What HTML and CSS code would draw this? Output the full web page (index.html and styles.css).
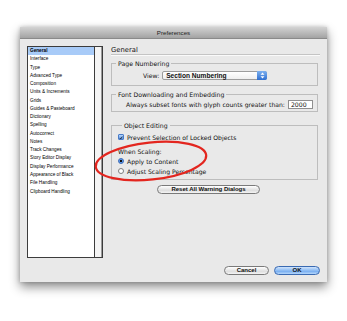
FILE: index.html
```html
<!DOCTYPE html>
<html>
<head>
<meta charset="utf-8">
<link rel="stylesheet" href="styles.css">
</head>
<body>
<div class="window">
  <div class="titlebar">Preferences</div>
  <div class="body">
    <div class="panes">
      <div class="sidebar">
        <ul class="list">
          <li class="sel">General</li>
          <li>Interface</li>
          <li>Type</li>
          <li>Advanced Type</li>
          <li>Composition</li>
          <li>Units &amp; Increments</li>
          <li>Grids</li>
          <li>Guides &amp; Pasteboard</li>
          <li>Dictionary</li>
          <li>Spelling</li>
          <li>Autocorrect</li>
          <li>Notes</li>
          <li>Track Changes</li>
          <li>Story Editor Display</li>
          <li>Display Performance</li>
          <li>Appearance of Black</li>
          <li>File Handling</li>
          <li>Clipboard Handling</li>
        </ul>
        <div class="scroll"></div>
      </div>
      <div class="main">
        <div class="heading">General</div>
        <fieldset class="group g1">
          <legend>Page Numbering</legend>
          <div class="row view-row">
            <span class="lbl">View:</span>
            <div class="popup"><span>Section Numbering</span><span class="stepper"><svg width="5" height="7" viewBox="0 0 5 7"><path d="M2.5 0.5 L4.5 2.8 L0.5 2.8 Z M2.5 6.5 L4.5 4.2 L0.5 4.2 Z" fill="#fff"/></svg></span></div>
          </div>
        </fieldset>
        <fieldset class="group g2">
          <legend>Font Downloading and Embedding</legend>
          <div class="row font-row">
            <span class="lbl">Always subset fonts with glyph counts greater than:</span>
            <div class="input">2000</div>
          </div>
        </fieldset>
        <fieldset class="group g3">
          <legend>Object Editing</legend>
          <div class="opt"><span class="check"><svg width="6" height="6" viewBox="0 0 6 6"><path d="M1.2 3 L2.5 4.5 L4.9 0.9" stroke="#111" stroke-width="1.1" fill="none"/></svg></span>Prevent Selection of Locked Objects</div>
          <div class="sub">When Scaling:</div>
          <div class="opt"><span class="radio on"></span>Apply to Content</div>
          <div class="opt"><span class="radio"></span>Adjust Scaling Percentage</div>
        </fieldset>
        <div class="reset-row"><button class="btn reset">Reset All Warning Dialogs</button></div>
      </div>
    </div>
    <div class="footer">
      <button class="btn cancel">Cancel</button>
      <button class="btn ok">OK</button>
    </div>
  </div>
</div>
<svg class="mark" width="130" height="56" viewBox="0 0 130 56">
  <ellipse cx="60" cy="27" rx="55.5" ry="18.5" transform="rotate(-6 60 27)" fill="none" stroke="#e3261f" stroke-width="2.2"/>
</svg>
</body>
</html>
```
FILE: styles.css
```css
html, body {
  margin: 0;
  padding: 0;
  background: #fff;
}
body {
  position: relative;
  width: 347px;
  height: 321px;
  overflow: hidden;
  font-family: "DejaVu Sans", "Liberation Sans", sans-serif;
  color: #111;
}
.window {
  margin: 27px 0 0 20px;
  width: 307px;
  height: 255px;
  display: flex;
  flex-direction: column;
  background: #e9e9e9;
  box-shadow: 0 5px 10px rgba(0,0,0,0.45), 0 0 4px rgba(0,0,0,0.2);
}
.titlebar {
  height: 11px;
  line-height: 11px;
  background: linear-gradient(#d3d3d3, #a3a3a3);
  border-bottom: 1px solid #8a8a8a;
  text-align: center;
  font-family: "Liberation Sans", Arial, sans-serif;
  font-size: 6.2px;
  color: #222;
}
.body {
  flex: 1;
  display: flex;
  flex-direction: column;
  padding: 7px 7px 7px 7px;
}
.panes {
  display: flex;
  height: 212px;
}
.sidebar {
  display: flex;
  width: 76px;
  border: 1px solid #3c3c3c;
  background: #fff;
  box-sizing: border-box;
}
.list {
  list-style: none;
  margin: 0;
  padding: 0;
  flex: 1;
  border-right: 1px solid #3c3c3c;
}
.list li {
  height: 8.27px;
  line-height: 8.27px;
  font-family: "Liberation Sans", Arial, sans-serif;
  font-size: 4.7px;
  padding-left: 2px;
  color: #000;
  white-space: nowrap;
}
.list li.sel {
  background: #a8cbf8;
  font-weight: bold;
}
.scroll {
  width: 6px;
  background: #f4f4f4;
  border-right: 1px solid #9a9a9a;
}
.main {
  margin-left: 8px;
  width: 209px;
  display: flex;
  flex-direction: column;
  font-size: 6.1px;
}
.heading {
  font-size: 6.8px;
  height: 8px;
  line-height: 8px;
  border-bottom: 1px solid #c4c4c4;
  box-shadow: 0 1px 0 #fafafa;
}
.group {
  margin: 0;
  padding: 0;
  border: 1px solid #bdbdbd;
  min-inline-size: 0;
  width: 207px;
  box-sizing: border-box;
}
.group legend {
  padding: 0 2px;
  margin-left: 4px;
  font-size: 6.2px;
  line-height: 7px;
}
.g1 {
  margin-top: 5px;
  height: 26px;
  padding-top: 4px;
}
.view-row {
  display: flex;
  align-items: center;
  padding-left: 31px;
}
.lbl {
  margin-right: 3px;
}
.popup {
  width: 105px;
  height: 9px;
  box-sizing: border-box;
  border: 1px solid #9c9c9c;
  background: linear-gradient(#fff, #eee);
  border-radius: 2px;
  display: flex;
  align-items: center;
  justify-content: space-between;
  padding-left: 3px;
  font-family: "Liberation Sans", Arial, sans-serif;
  font-weight: bold;
  font-size: 6.6px;
}
.stepper {
  width: 10px;
  height: 9px;
  margin-right: -1px;
  margin-top: -1px;
  margin-bottom: -1px;
  background: linear-gradient(#7db1f0, #2f6fd0);
  border-radius: 0 2px 2px 0;
  display: flex;
  align-items: center;
  justify-content: center;
}
.g2 {
  margin-top: 5px;
  height: 21px;
  padding-top: 2px;
}
.font-row {
  display: flex;
  align-items: center;
  padding-left: 14px;
}
.input {
  margin-left: 0;
  width: 25px;
  height: 9px;
  line-height: 8px;
  box-sizing: border-box;
  border: 1px solid #8f8f8f;
  background: #fff;
  padding-left: 2px;
  font-size: 6.2px;
}
.g3 {
  margin-top: 10px;
  height: 58px;
  padding: 3px 0 0 6px;
}
.opt {
  display: flex;
  align-items: center;
  height: 10px;
}
.sub {
  height: 8px;
  line-height: 8px;
  margin-top: 6px;
}
.check {
  width: 6px;
  height: 6px;
  box-sizing: border-box;
  border: 1px solid #4a7cc8;
  background: linear-gradient(#b7d5fb, #5b95e4);
  border-radius: 1px;
  margin-right: 3px;
  display: flex;
}
.radio {
  width: 6px;
  height: 6px;
  box-sizing: border-box;
  border-radius: 50%;
  border: 1px solid #7d7d7d;
  background: #fff;
  margin-right: 3px;
}
.radio.on {
  border-color: #3a6bb8;
  background: radial-gradient(circle, #111 0 1px, #5f98e6 1.4px);
}
.reset-row {
  margin-top: 5px;
  padding-left: 46px;
}
.btn {
  font-family: "Liberation Sans", Arial, sans-serif;
  font-size: 6px;
  height: 9px;
  padding: 0;
  line-height: 7px;
  border: 1px solid #7a7a7a;
  border-radius: 5px;
  background: linear-gradient(#ffffff, #e4e4e4 50%, #d8d8d8 51%, #f4f4f4);
  color: #111;
  font-weight: bold;
}
.reset {
  width: 103px;
}
.footer {
  margin-top: 8px;
  display: flex;
  justify-content: flex-end;
  gap: 5px;
}
.cancel {
  width: 45px;
}
.ok {
  width: 46px;
  border-color: #3a6ab2;
  background: linear-gradient(#cfe4fd, #8ebcf3 50%, #6aa4ee 51%, #b5d7fb);
}
.mark {
  position: absolute;
  left: 91px;
  top: 134px;
}
```
